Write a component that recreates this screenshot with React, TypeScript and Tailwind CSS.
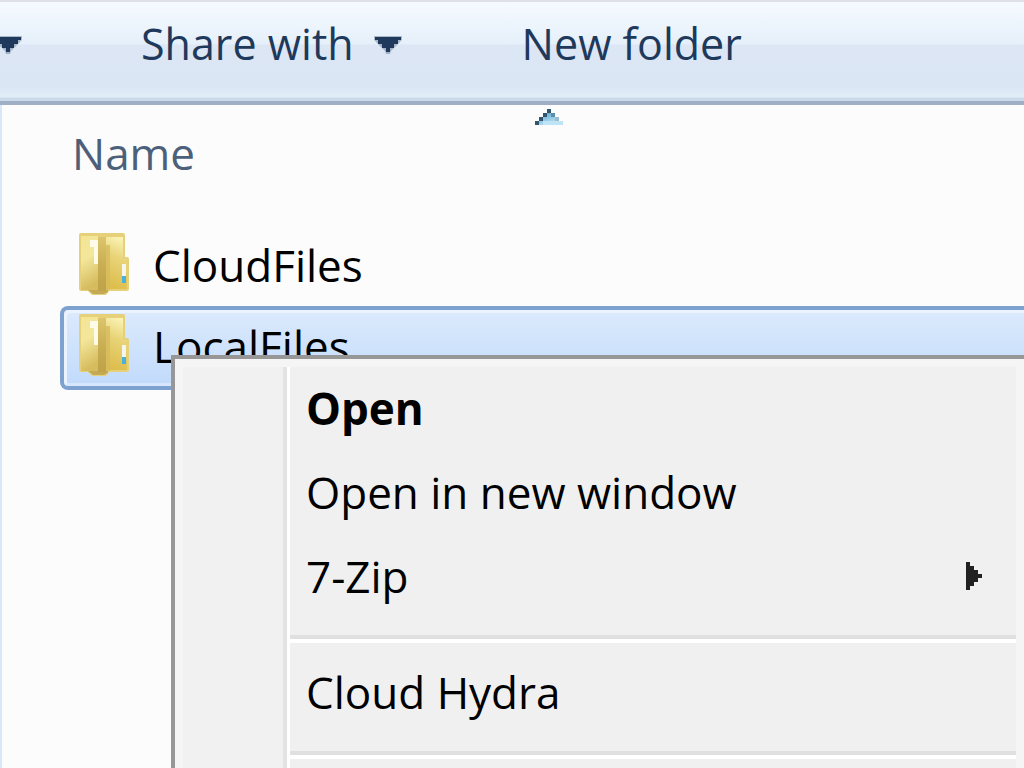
import { useState } from 'react';
import { clsx } from 'clsx';

const files = ['CloudFiles', 'LocalFiles'];

const menuGroups = [
  [
    { label: 'Open', isDefault: true },
    { label: 'Open in new window' },
    { label: '7-Zip', submenu: true },
  ],
  [{ label: 'Cloud Hydra' }],
];

const CaretDown = () => (
  <svg viewBox="0 0 28 20" className="h-5 w-7 shrink-0" aria-hidden="true">
    <path d="M0 2h28v4l-3 3-4 4-4 4-1 3h-4l-1-3-4-4-4-4-3-3z" fill="#1e395b" opacity="0.3" />
    <path d="M1 3h26v3h-3v4h-4v4h-4v4h-4v-4H8v-4H4V6H1z" fill="#1e395b" />
  </svg>
);

const SortArrow = () => (
  <svg viewBox="0 0 28 16" className="h-4 w-7" aria-hidden="true">
    <defs>
      <linearGradient id="sort-fill" x1="0" y1="0" x2="0.6" y2="1">
        <stop offset="0" stopColor="#3c6680" />
        <stop offset="0.5" stopColor="#7fbbda" />
        <stop offset="1" stopColor="#c3e6f8" />
      </linearGradient>
    </defs>
    <path d="M12 0h4v4h4v4h4v4h4v4H0v-4h4V8h4V4h4z" fill="url(#sort-fill)" />
    <path d="M12 0h4v4h-4zM8 4h4v4H8zM4 8h4v4H4zM0 12h4v4H0z" fill="#31556c" />
    <path d="M16 4h4v4h-4z" fill="#5d8da8" />
    <path d="M20 8h4v4h-4z" fill="#9dbccb" />
    <path d="M8 12h20v4H8z" fill="#bfe4f7" />
  </svg>
);

const SubmenuArrow = () => (
  <svg viewBox="0 0 16 28" className="h-7 w-4 shrink-0" aria-hidden="true">
    <path d="M0 0h4v4h4v4h4v4h4v4h-4v4H8v4H4v4H0z" fill="#212121" />
  </svg>
);

const FolderIcon = () => (
  <svg viewBox="0 0 50 62" className="h-[62px] w-[50px] shrink-0" aria-hidden="true">
    <defs>
      <linearGradient id="folder-left" x1="0" y1="0" x2="0.2" y2="1">
        <stop offset="0" stopColor="#f3e595" />
        <stop offset="0.45" stopColor="#f3e79c" />
        <stop offset="1" stopColor="#d6bc5e" />
      </linearGradient>
      <linearGradient id="folder-right" x1="0.6" y1="0" x2="0.4" y2="1">
        <stop offset="0" stopColor="#faf3b4" />
        <stop offset="0.4" stopColor="#e8d377" />
        <stop offset="1" stopColor="#ddbd4b" />
      </linearGradient>
      <linearGradient id="folder-spine" x1="0" y1="0" x2="0" y2="1">
        <stop offset="0" stopColor="#dcc56c" />
        <stop offset="0.5" stopColor="#c9ae54" />
        <stop offset="1" stopColor="#c0a248" />
      </linearGradient>
    </defs>
    <path d="M2 0h42q2 0 2 2v22h2q2 0 2 2v30q0 2-2 2H30l-3 4H13l-4-4H2q-2 0-2-2V2q0-2 2-2z" fill="#e7d07a" />
    <path d="M2 3h17v54H2z" fill="url(#folder-left)" />
    <path d="M27 4h17v22h4v30H27z" fill="url(#folder-right)" />
    <path d="M9 57h20v2l-4 2H14z" fill="#c4aa55" />
    <path d="M19 4h8v54h-8z" fill="url(#folder-spine)" />
    <path d="M27 12h4v45h-4z" fill="#d5ba5c" opacity="0.8" />
    <path d="M11 7h8v24h-4V14h-4z" fill="#fffef2" opacity="0.9" />
    <path d="M43 31h4v12h-4z" fill="#f4f5ef" />
    <path d="M43 43h4v7h-4z" fill="#48b2dc" />
  </svg>
);

const ContextMenu = () => (
  <div
    role="menu"
    className="absolute -right-1 bottom-0 left-[171px] top-[355px] border-4 border-b-0 border-[#979797] bg-[#f5f5f5] p-2 pb-0"
  >
    <div className="flex h-full bg-[#f0f0f0]">
      <div className="w-[104px] shrink-0 border-r-4 border-[#e2e3e3] bg-[#f1f1f1] shadow-[3px_0_0_#ffffff]" />
      <div className="ml-[3px] flex-1">
        {menuGroups.map((group, index) => (
          <div key={index} role="group">
            {group.map((item) => (
              <button
                key={item.label}
                type="button"
                role="menuitem"
                className={clsx(
                  'flex h-21 w-full items-center justify-between pl-4 pr-[34px] pb-0.5 text-left text-black',
                  item.isDefault && 'font-bold'
                )}
              >
                {item.label}
                {item.submenu && <SubmenuArrow />}
              </button>
            ))}
            <div role="separator" className="mb-2 mt-4 h-2 border-b-4 border-t-4 border-b-white border-t-[#e0e0e0]" />
          </div>
        ))}
      </div>
    </div>
  </div>
);

const App = () => {
  const [selected, setSelected] = useState('LocalFiles');

  return (
    <div className="relative flex min-h-screen flex-col overflow-hidden bg-[#fcfcfc] font-['Open_Sans','Noto_Sans',sans-serif] text-[44px] leading-[56px]">
      <header className="flex h-[105px] shrink-0 items-start border-b-4 border-t-2 border-b-[#a0afc5] border-t-[#dfe1e6] bg-[linear-gradient(to_bottom,#f5faff_0px,#e6f0fa_42px,#dce6f4_43px,#dbe6f4_84px,#e2edfa_95px,#cadae9_96px)] pt-[14px] text-[43px] text-[#1e395b]">
        <button type="button" aria-label="Include in library" className="-ml-1.5 flex h-14 items-center">
          <CaretDown />
        </button>
        <button type="button" className="ml-[119px] flex h-14 items-center gap-5 whitespace-nowrap">
          Share with
          <CaretDown />
        </button>
        <button type="button" className="ml-[120px] h-14 whitespace-nowrap">New folder</button>
      </header>

      <main className="flex-1 border-l-2 border-[#d9e7fa]">
        <div className="relative h-[120px] pl-[70px] pt-5">
          <button type="button" className="block text-[#4c607a]">Name</button>
          <div className="absolute left-[533px] top-1">
            <SortArrow />
          </div>
        </div>
        <ul className="pl-[58px]">
          {files.map((name) => (
            <li key={name}>
              <button
                type="button"
                onClick={() => setSelected(name)}
                className={clsx(
                  'flex w-full items-start gap-6 text-left text-black',
                  selected === name
                    ? 'h-21 rounded-l-lg border-4 border-r-0 border-[#7da2d0] bg-linear-to-b from-[#dceafc] to-[#c1dbfc] pl-[15px] pt-1 shadow-[inset_3px_3px_0_#ebf4fe,inset_0_-3px_0_#d6e7fd]'
                    : 'h-[81px] pl-[19px] pt-2'
                )}
              >
                <FolderIcon />
                <span className="pt-1">{name}</span>
              </button>
            </li>
          ))}
        </ul>
      </main>

      <ContextMenu />
    </div>
  );
};

export default App;
